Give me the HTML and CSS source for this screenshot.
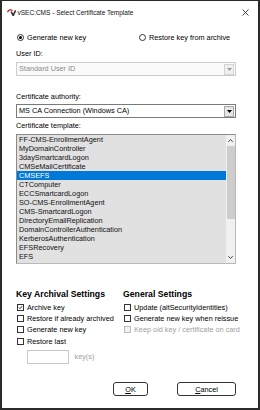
FILE: index.html
```html
<!DOCTYPE html>
<html>
<head>
<meta charset="utf-8">
<link rel="stylesheet" href="styles.css">
</head>
<body>
<div class="window">
  <div class="titlebar">
    <svg class="logo" width="9" height="7" viewBox="0 0 9 7">
      <path d="M0.5 3.2 C1.5 0.6 4 0.2 5.6 1.6" fill="none" stroke="#d62027" stroke-width="1.3"/>
      <path d="M4.2 2.6 L6.2 6.6 L8.6 1.2" fill="none" stroke="#2b2b2b" stroke-width="1.5"/>
    </svg>
    <span class="title">vSEC:CMS - Select Certificate Template</span>
    <svg class="close" width="7" height="7" viewBox="0 0 7 7">
      <path d="M0.5 0.5 L6.5 6.5 M6.5 0.5 L0.5 6.5" stroke="#333" stroke-width="0.9"/>
    </svg>
  </div>
  <div class="content">
    <div class="radios">
      <div class="radio-item first"><span class="radio checked"></span><span>Generate new key</span></div>
      <div class="radio-item"><span class="radio"></span><span>Restore key from archive</span></div>
    </div>
    <div class="label l-user">User ID:</div>
    <div class="combo disabled">
      <span class="combo-text">Standard User ID</span>
      <span class="combo-btn"><svg width="5" height="3" viewBox="0 0 5 3"><path d="M0 0 H5 L2.5 3 Z" fill="#9a9a9a"/></svg></span>
    </div>
    <div class="label l-ca">Certificate authority:</div>
    <div class="combo">
      <span class="combo-text">MS CA Connection (Windows CA)</span>
      <span class="combo-btn"><svg width="5" height="3" viewBox="0 0 5 3"><path d="M0 0 H5 L2.5 3 Z" fill="#000"/></svg></span>
    </div>
    <div class="label l-tpl">Certificate template:</div>
    <div class="list">
      <div class="items">
        <div class="item">FF-CMS-EnrollmentAgent</div>
        <div class="item">MyDomainController</div>
        <div class="item">3daySmartcardLogon</div>
        <div class="item">CMSeMailCertificate</div>
        <div class="item selected">CMSEFS</div>
        <div class="item">CTComputer</div>
        <div class="item">ECCSmartcardLogon</div>
        <div class="item">SO-CMS-EnrollmentAgent</div>
        <div class="item">CMS-SmartcardLogon</div>
        <div class="item">DirectoryEmailReplication</div>
        <div class="item">DomainControllerAuthentication</div>
        <div class="item">KerberosAuthentication</div>
        <div class="item">EFSRecovery</div>
        <div class="item">EFS</div>
        <div class="item">DomainController</div>
      </div>
      <div class="scrollbar">
        <span class="sb-arrow"><svg width="5" height="3" viewBox="0 0 5 3"><path d="M0.3 2.8 L2.5 0.5 L4.7 2.8" fill="none" stroke="#444" stroke-width="1"/></svg></span>
        <span class="thumb"></span>
        <span class="track"></span>
        <span class="sb-arrow"><svg width="5" height="3" viewBox="0 0 5 3"><path d="M0.3 0.2 L2.5 2.5 L4.7 0.2" fill="none" stroke="#444" stroke-width="1"/></svg></span>
      </div>
    </div>
    <div class="settings">
      <div class="col left">
        <div class="heading">Key Archival Settings</div>
        <div class="check-row"><span class="box"><svg width="7" height="7" viewBox="0 0 7 7"><path d="M1.2 3.4 L2.8 5.1 L5.9 1.6" fill="none" stroke="#111" stroke-width="1.2"/></svg></span><span>Archive key</span></div>
        <div class="check-row"><span class="box"></span><span>Restore if already archived</span></div>
        <div class="check-row"><span class="box"></span><span>Generate new key</span></div>
        <div class="check-row"><span class="box"></span><span>Restore last</span></div>
        <div class="keys-row"><span class="textbox"></span><span class="muted">key(s)</span></div>
      </div>
      <div class="col right">
        <div class="heading">General Settings</div>
        <div class="check-row"><span class="box"></span><span>Update (altSecurityIdentities)</span></div>
        <div class="check-row"><span class="box"></span><span>Generate new key when reissue</span></div>
        <div class="check-row"><span class="box disabled"></span><span class="muted">Keep old key / certificate on card</span></div>
      </div>
    </div>
    <div class="buttons">
      <div class="btn ok"><span class="u">O</span>K</div>
      <div class="btn cancel"><span class="u">C</span>ancel</div>
    </div>
  </div>
</div>
</body>
</html>
```
FILE: styles.css
```css
* { box-sizing: border-box; }
html, body { margin: 0; padding: 0; background: #fff; }
body {
  font-family: "Liberation Sans", Arial, sans-serif;
  font-size: 7.3px;
  color: #000;
}
.window {
  width: 260px;
  height: 410px;
  border-style: solid;
  border-color: #2a2a2a;
  border-width: 1px 2px 2px 2px;
  background: #fff;
  overflow: hidden;
}
.titlebar {
  height: 23px;
  display: flex;
  align-items: center;
  padding-left: 4.5px;
}
.logo { flex: 0 0 auto; margin-right: 2px; }
.title { font-size: 6.5px; color: #111; }
.close { margin-left: auto; margin-right: 9px; }
.content {
  padding: 0 22px 0 14px;
}
.radios {
  display: flex;
  height: 10px;
  margin-top: 8px;
  align-items: center;
}
.radio-item { display: flex; align-items: center; }
.radio-item.first { flex: 0 0 122px; }
.radio {
  width: 7px; height: 7px;
  border: 1px solid #333;
  border-radius: 50%;
  margin-left: 1px;
  margin-right: 3px;
  display: flex; align-items: center; justify-content: center;
}
.radio.checked::after {
  content: "";
  width: 3px; height: 3px;
  border-radius: 50%;
  background: #000;
}
.label { height: 9px; line-height: 9px; }
.l-user { margin-top: 7px; }
.l-ca { margin-top: 16px; }
.l-tpl { margin-top: 3px; }
.combo {
  height: 14px;
  margin-top: 4px;
  border: 1px solid #7a7a7a;
  display: flex;
  align-items: center;
  padding: 1px;
}
.combo + .label { }
.combo.disabled { border-color: #cccccc; background: #fafafa; color: #8c8c8c; }
.combo:not(.disabled) { margin-top: 3px; }
.combo-text { flex: 1; padding-left: 1px; line-height: 10px; }
.combo-btn {
  width: 10px; height: 11px;
  border: 1px solid #a8a8a8;
  background: #e6e6e6;
  display: flex; align-items: center; justify-content: center;
}
.combo.disabled .combo-btn { border-color: #d4d4d4; background: #f0f0f0; }
.list {
  margin-top: 4px;
  height: 130px;
  border: 1px solid #8a8a8a;
  border-right-color: #b8b8b8;
  border-bottom-color: #b8b8b8;
  display: flex;
  background: #e1e1e1;
}
.items { flex: 1; overflow: hidden; }
.item { height: 9px; line-height: 9px; padding-left: 2px; white-space: nowrap; color: #111; }
.item.selected { background: #0078d7; color: #fff; }
.scrollbar {
  width: 9px;
  background: #f0f0f0;
  display: flex;
  flex-direction: column;
}
.sb-arrow { height: 11px; display: flex; align-items: center; justify-content: center; }
.thumb { height: 73px; margin: 0 0.5px; background: #cdcdcd; }
.track { flex: 1; }
.settings { display: flex; margin-top: 25px; }
.col.left { flex: 0 0 107px; }
.col.right { flex: 1; }
.heading { font-weight: bold; font-size: 8.7px; height: 11px; line-height: 11px; margin-bottom: 2px; white-space: nowrap; }
.check-row { display: flex; align-items: center; height: 11.2px; white-space: nowrap; }
.box {
  width: 7px; height: 7px;
  border: 1px solid #333;
  background: #fff;
  margin-left: 0.5px;
  margin-right: 3.5px;
  display: flex; align-items: center; justify-content: center;
  flex: 0 0 auto;
}
.box svg { display: block; }
.box.disabled { border-color: #bcbcbc; background: #f2f2f2; }
.muted { color: #a0a0a0; }
.keys-row { display: flex; align-items: center; margin-top: 3px; margin-left: 10.5px; }
.textbox { width: 42px; height: 14px; border: 1px solid #c8c8c8; margin-right: 6px; }
.buttons { display: flex; justify-content: flex-end; gap: 29px; margin-top: 18px; }
.btn {
  height: 14.5px;
  border: 1px solid #333;
  border-radius: 3px;
  background: #fff;
  display: flex; align-items: center; justify-content: center;
}
.btn.ok { width: 35px; }
.btn.cancel { width: 59px; }
.u { text-decoration: underline; }
```
